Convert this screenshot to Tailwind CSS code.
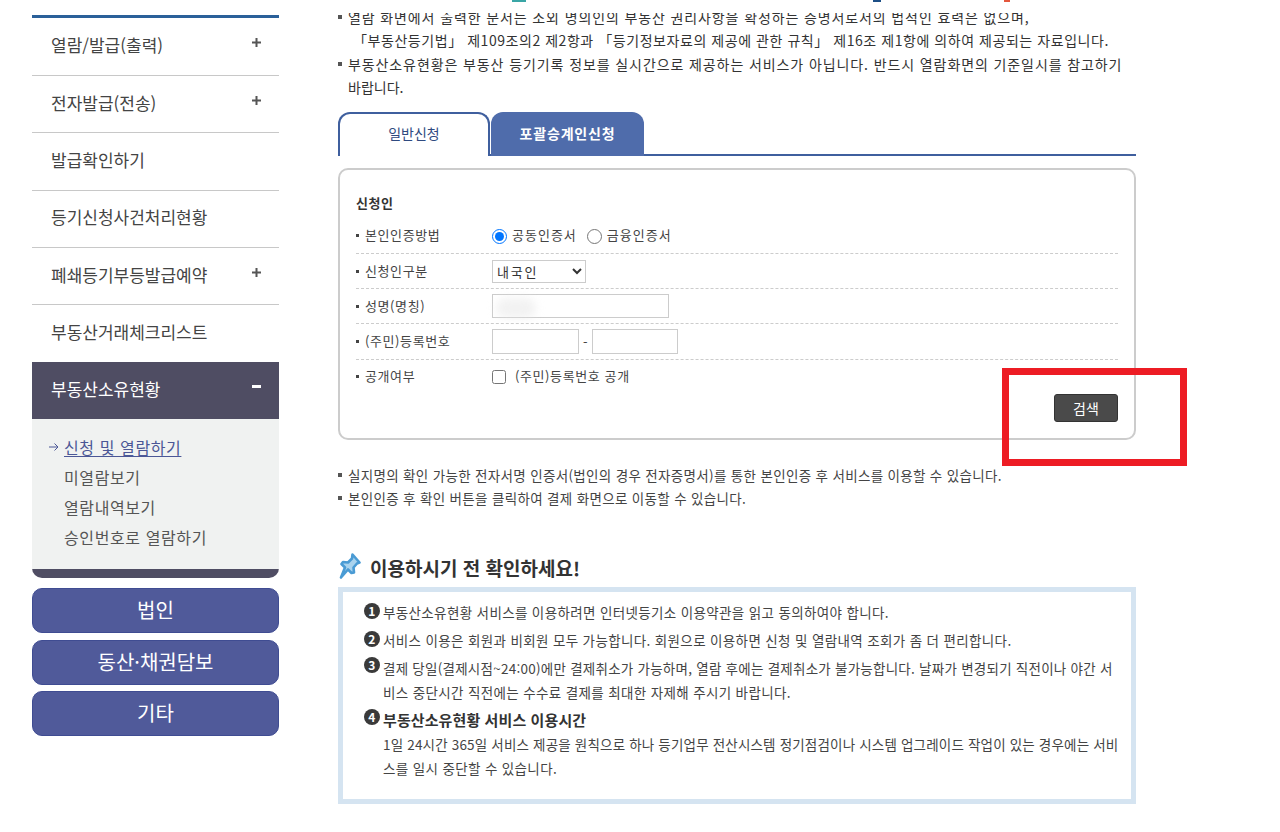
<!DOCTYPE html>
<html lang="ko">
<head>
  <meta charset="UTF-8">
  <title>부동산소유현황</title>
  <script src="https://cdn.jsdelivr.net/npm/@tailwindcss/browser@4"></script>
</head>
<body class="bg-white h-[832px] overflow-hidden font-['Noto_Sans_CJK_KR','Noto_Sans',sans-serif] text-[#333]">
  <div class="relative flex items-start pl-[32px] h-[832px]">

    <!-- left menu -->
    <aside class="w-[247px] mt-[15px] mr-[59px] shrink-0">
      <ul class="border-t-[3px] border-[#2a6099] text-[17px] text-[#444]">
        <li class="h-[58px] pb-[4px] border-b border-[#c8c8c8] flex items-center justify-between pl-[19px] pr-[18px]"><span>열람/발급(출력)</span><svg class="w-[9px] h-[9px] -mt-[4px]" viewBox="0 0 9 9" fill="#555"><path d="M3.500 0h2v3.500H9v2H5.500V9h-2V5.500H0v-2h3.500z"/></svg></li>
        <li class="h-[57px] pb-[3px] border-b border-[#c8c8c8] flex items-center justify-between pl-[19px] pr-[18px]"><span>전자발급(전송)</span><svg class="w-[9px] h-[9px] -mt-[5px]" viewBox="0 0 9 9" fill="#555"><path d="M3.500 0h2v3.500H9v2H5.500V9h-2V5.500H0v-2h3.500z"/></svg></li>
        <li class="h-[58px] pb-[4px] border-b border-[#c8c8c8] flex items-center pl-[19px]">발급확인하기</li>
        <li class="h-[57px] pb-[4px] border-b border-[#c8c8c8] flex items-center pl-[19px]">등기신청사건처리현황</li>
        <li class="h-[57px] pb-[3px] border-b border-[#c8c8c8] flex items-center justify-between pl-[19px] pr-[18px]"><span>폐쇄등기부등발급예약</span><svg class="w-[9px] h-[9px] -mt-[5px]" viewBox="0 0 9 9" fill="#555"><path d="M3.500 0h2v3.500H9v2H5.500V9h-2V5.500H0v-2h3.500z"/></svg></li>
        <li class="h-[57px] pb-[4px] flex items-center pl-[19px]">부동산거래체크리스트</li>
        <li class="h-[57px] pb-[4px] bg-[#4f4d63] text-white flex items-center justify-between pl-[19px] pr-[18px]"><span>부동산소유현황</span><span class="w-[9px] h-[3px] bg-white -mt-[4px]"></span></li>
      </ul>
      <div class="bg-[#4f4d63] rounded-b-[10px] pb-[9px]">
        <ul class="bg-[#f0f2f1] h-[150px] pt-[13px] text-[16px] tracking-[0.600px] text-[#555]">
          <li class="h-[30px] leading-[30px] flex items-center pl-[17px] text-[#4b5796]">
            <svg class="w-[10px] h-[10px] mr-[5px]" viewBox="0 0 10 10" fill="none" stroke="#4b5796" stroke-width="1"><path d="M0 5h9M5.500 1.500 9 5l-3.500 3.500"/></svg>
            <span class="underline underline-offset-2">신청 및 열람하기</span>
          </li>
          <li class="h-[30px] leading-[30px] pl-[32px]">미열람보기</li>
          <li class="h-[30px] leading-[30px] pl-[32px]">열람내역보기</li>
          <li class="h-[30px] leading-[30px] pl-[32px]">승인번호로 열람하기</li>
        </ul>
      </div>
      <div class="mt-[10px] flex flex-col text-[20px] text-white text-center">
        <div class="h-[45px] leading-[42px] bg-[#505a9a] border border-[#3f4c92] rounded-[10px]">법인</div>
        <div class="h-[45px] mt-[7px] leading-[42px] bg-[#505a9a] border border-[#3f4c92] rounded-[10px]">동산·채권담보</div>
        <div class="h-[45px] mt-[6px] leading-[42px] bg-[#505a9a] border border-[#3f4c92] rounded-[10px]">기타</div>
      </div>
    </aside>

    <!-- main column -->
    <main class="w-[798px] shrink-0 pt-[6px] text-[14px] text-[#333]">
      <ul class="leading-[23.300px] whitespace-nowrap">
        <li class="pl-[10px] relative"><span class="absolute left-0 top-[9px] w-[4px] h-[4px] bg-[#555]"></span><span class="tracking-[0.880px]">열람 화면에서 출력한 문서는 소외 명의인의 부동산 권리사항을 확정하는 증명서로서의 법적인 효력은 없으며,</span><br><span class="pl-[5px] tracking-[0.550px]">「부동산등기법」 제109조의2 제2항과 「등기정보자료의 제공에 관한 규칙」 제16조 제1항에 의하여 제공되는 자료입니다.</span></li>
        <li class="pl-[10px] relative"><span class="absolute left-0 top-[9px] w-[4px] h-[4px] bg-[#555]"></span><span class="tracking-[0.900px]">부동산소유현황은 부동산 등기기록 정보를 실시간으로 제공하는 서비스가 아닙니다. 반드시 열람화면의 기준일시를 참고하기</span><br>바랍니다.</li>
      </ul>

      <!-- tabs -->
      <div class="mt-[13px] h-[44px] flex items-end border-b-2 border-[#3f5f9e] text-[14px]">
        <div class="w-[152px] h-[44px] -mb-[2px] bg-white border-2 border-b-0 border-[#3f5f9e] rounded-t-[12px] text-center leading-[38px] text-[#2f4a80]">일반신청</div>
        <div class="w-[153px] h-[44px] ml-[1px] -mb-[2px] bg-[#4f6cab] rounded-t-[12px] text-center leading-[42px] text-white font-bold tracking-[0.800px]">포괄승계인신청</div>
      </div>

      <!-- form -->
      <div class="mt-[12px] h-[272px] border-2 border-[#cccccc] rounded-[10px] pt-[23px] pl-[16px] pr-[16px] text-[13px] tracking-[0.600px] text-[#444]">
        <div class="h-[26px] leading-[20px] font-bold text-[13px] text-[#333]">신청인</div>
        <div class="h-[35px] border-b border-dashed border-[#ccc] flex items-center">
          <span class="w-[136px] -mt-[2px] flex items-center"><i class="w-[3px] h-[3px] bg-[#444] mr-[6px]"></i>본인인증방법</span>
          <label class="flex items-center tracking-[1px]"><input type="radio" name="cert" checked class="w-[15px] h-[15px] m-0 mr-[5px]"><span class="-mt-[2px]">공동인증서</span></label>
          <label class="flex items-center ml-[10px] tracking-[1px]"><input type="radio" name="cert" class="w-[15px] h-[15px] m-0 mr-[5px]"><span class="-mt-[2px]">금융인증서</span></label>
        </div>
        <div class="h-[35px] border-b border-dashed border-[#ccc] flex items-center">
          <span class="w-[136px] flex items-center"><i class="w-[3px] h-[3px] bg-[#444] mr-[6px]"></i>신청인구분</span>
          <select class="w-[94px] h-[23px] border border-[#ccc] text-[13px] tracking-[1.800px] text-[#333]"><option>내국인</option></select>
        </div>
        <div class="h-[35px] border-b border-dashed border-[#ccc] flex items-center">
          <span class="w-[136px] flex items-center"><i class="w-[3px] h-[3px] bg-[#444] mr-[6px]"></i>성명(명칭)</span>
          <div class="relative">
            <input type="text" class="block w-[177px] h-[24px] border border-[#ccc]">
            <span class="absolute left-[4px] top-[4px] w-[40px] h-[20px] rounded-full bg-[#e6e6e6]/50 blur-[4px]"></span>
          </div>
        </div>
        <div class="h-[36px] border-b border-dashed border-[#ccc] flex items-center">
          <span class="w-[136px] -mt-[1px] flex items-center"><i class="w-[3px] h-[3px] bg-[#444] mr-[6px]"></i>(주민)등록번호</span>
          <input type="text" class="w-[87px] h-[25px] border border-[#ccc]">
          <span class="w-[13px] text-center">-</span>
          <input type="text" class="w-[86px] h-[25px] border border-[#ccc]">
        </div>
        <div class="h-[35px] flex items-center">
          <span class="w-[136px] -mt-[3px] flex items-center"><i class="w-[3px] h-[3px] bg-[#444] mr-[6px]"></i>공개여부</span>
          <label class="flex items-center"><input type="checkbox" class="w-[14px] h-[14px] m-0 mr-[9px] -mt-[1px]"><span class="-mt-[3px]">(주민)등록번호 공개</span></label>
        </div>
        <div class="flex justify-end -mt-[1px]">
          <button class="w-[64px] h-[28px] bg-[#4a4a4a] border border-[#333] rounded-[3px] text-white text-[14px] tracking-normal">검색</button>
        </div>
      </div>

      <ul class="mt-[24px] leading-[23px] text-[13.500px] tracking-[0.330px] text-[#444]">
        <li class="pl-[10px] relative"><span class="absolute left-0 top-[9px] w-[4px] h-[4px] bg-[#555]"></span>실지명의 확인 가능한 전자서명 인증서(법인의 경우 전자증명서)를 통한 본인인증 후 서비스를 이용할 수 있습니다.</li>
        <li class="pl-[10px] relative"><span class="absolute left-0 top-[9px] w-[4px] h-[4px] bg-[#555]"></span>본인인증 후 확인 버튼을 클릭하여 결제 화면으로 이동할 수 있습니다.</li>
      </ul>

      <h2 class="mt-[43px] h-[30px] flex items-center text-[19px] font-bold text-[#333]">
        <svg class="w-[22px] h-[26px] ml-[1px] mr-[9px] -mt-[4px]" viewBox="0 0 22 26"><path d="M13.500 1.500 20.500 9.500 18 10.500 14.500 14.500 15 19.500 12.500 20 9 16.500 2 24.500 6 14.500 2.500 11 4 9 9 9.500 13 5.500z" fill="#a9d3ee" stroke="#4a9bd4" stroke-width="2.600" stroke-linejoin="round"/></svg>
        이용하시기 전 확인하세요!
      </h2>

      <div class="mt-[4px] h-[217px] border-[5px] border-[#d5e4f1] pl-[21px] pt-[6px] text-[13.500px] tracking-[0.360px] text-[#444] whitespace-nowrap">
        <div class="flex h-[28px] items-center"><span class="w-[16px] h-[16px] mr-[3px] -mt-[3px] rounded-full bg-[#3a3a3a] text-white text-[12px] leading-[16px] text-center font-bold shrink-0">1</span>부동산소유현황 서비스를 이용하려면 인터넷등기소 이용약관을 읽고 동의하여야 합니다.</div>
        <div class="flex h-[28px] items-center"><span class="w-[16px] h-[16px] mr-[3px] -mt-[3px] rounded-full bg-[#3a3a3a] text-white text-[12px] leading-[16px] text-center font-bold shrink-0">2</span>서비스 이용은 회원과 비회원 모두 가능합니다. 회원으로 이용하면 신청 및 열람내역 조회가 좀 더 편리합니다.</div>
        <div class="flex pt-[2px] leading-[24px]"><span class="w-[16px] h-[16px] mr-[3px] mt-[1px] rounded-full bg-[#3a3a3a] text-white text-[12px] leading-[16px] text-center font-bold shrink-0">3</span><p><span class="tracking-[0.250px]">결제 당일(결제시점~24:00)에만 결제취소가 가능하며, 열람 후에는 결제취소가 불가능합니다. 날짜가 변경되기 직전이나 야간 서</span><br>비스 중단시간 직전에는 수수료 결제를 최대한 자제해 주시기 바랍니다.</p></div>
        <div class="flex pt-[4px] leading-[24px]"><span class="w-[16px] h-[16px] mr-[3px] mt-[1px] rounded-full bg-[#3a3a3a] text-white text-[12px] leading-[16px] text-center font-bold shrink-0">4</span><div><p class="font-bold text-[15px] tracking-[0.100px] text-[#333]">부동산소유현황 서비스 이용시간</p><p><span class="tracking-[0.180px]">1일 24시간 365일 서비스 제공을 원칙으로 하나 등기업무 전산시스템 정기점검이나 시스템 업그레이드 작업이 있는 경우에는 서비</span><br>스를 일시 중단할 수 있습니다.</p></div></div>
      </div>
    </main>

    <!-- cropped edge of the page above -->
    <div class="absolute left-0 top-0 w-full h-[13px] bg-white">
      <span class="absolute left-[512px] top-0 w-[14px] h-[2px] bg-[#3aa6a6]"></span>
      <span class="absolute left-[873px] top-0 w-[8px] h-[2px] bg-[#1d4f86]"></span>
      <span class="absolute left-[1004px] top-0 w-[6px] h-[2px] bg-[#e4573d]"></span>
    </div>

    <!-- annotation box -->
    <div class="absolute left-[1002px] top-[368px] w-[185px] h-[98px] border-[7px] border-[#ed1c24]"></div>
  </div>
</body>
</html>
